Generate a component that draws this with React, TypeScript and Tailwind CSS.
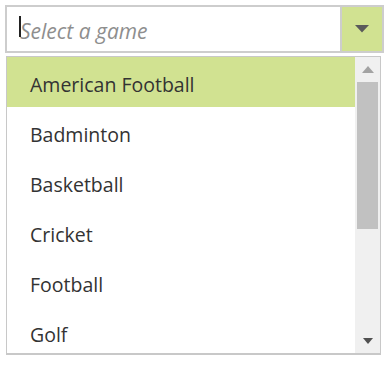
import React from 'react'

const games = ['American Football', 'Badminton', 'Basketball', 'Cricket', 'Football', 'Golf']

export default function App() {
  return (
    <div className="w-[391px] h-[365px] bg-white pt-[5px] pl-[5px] font-['Open_Sans',sans-serif]">
      {/* поле ввода */}
      <div className="flex w-[379px] h-[48px] border-2 border-[#cdcdcd] bg-white">
        <div className="relative flex flex-1 items-center pl-[13px] pt-[4px]">
          <span className="absolute left-[12px] top-[9px] w-[2px] h-[21px] bg-[#222]" />
          <span className="text-[21px] italic text-[#8e8e8e] leading-none">Select a game</span>
        </div>
        <div className="flex w-[42px] items-center justify-center border-l-2 border-[#cdcdcd] bg-[#d1e291]">
          <svg width="14" height="8" viewBox="0 0 14 8">
            <path d="M0 0 H14 L7 7.5 Z" fill="#5a5a5a" />
          </svg>
        </div>
      </div>

      {/* выпадающий список */}
      <div className="mt-[3px] ml-[1px] flex w-[375px] h-[299px] border border-b-2 border-[#c8c8c8] bg-white">
        <div className="flex-1 overflow-hidden">
          {games.map((g, i) => (
            <div
              key={g}
              className={`flex h-[50px] items-center pl-[23px] pt-[5px] text-[19.5px] text-[#333] ${i === 0 ? 'bg-[#d1e291]' : ''}`}
            >
              {g}
            </div>
          ))}
        </div>
        <div className="flex w-[25px] flex-col items-center bg-[#f0f0f0]">
          <div className="flex h-[25px] w-full items-center justify-center">
            <svg width="12" height="7" viewBox="0 0 12 7">
              <path d="M6 0 L12 7 H0 Z" fill="#a3a3a3" />
            </svg>
          </div>
          <div className="h-[147px] w-[21px] bg-[#c1c1c1]" />
          <div className="flex-1" />
          <div className="flex h-[24px] w-full items-center justify-center">
            <svg width="10" height="6" viewBox="0 0 10 6">
              <path d="M0 0 H10 L5 6 Z" fill="#505050" />
            </svg>
          </div>
        </div>
      </div>
    </div>
  )
}
